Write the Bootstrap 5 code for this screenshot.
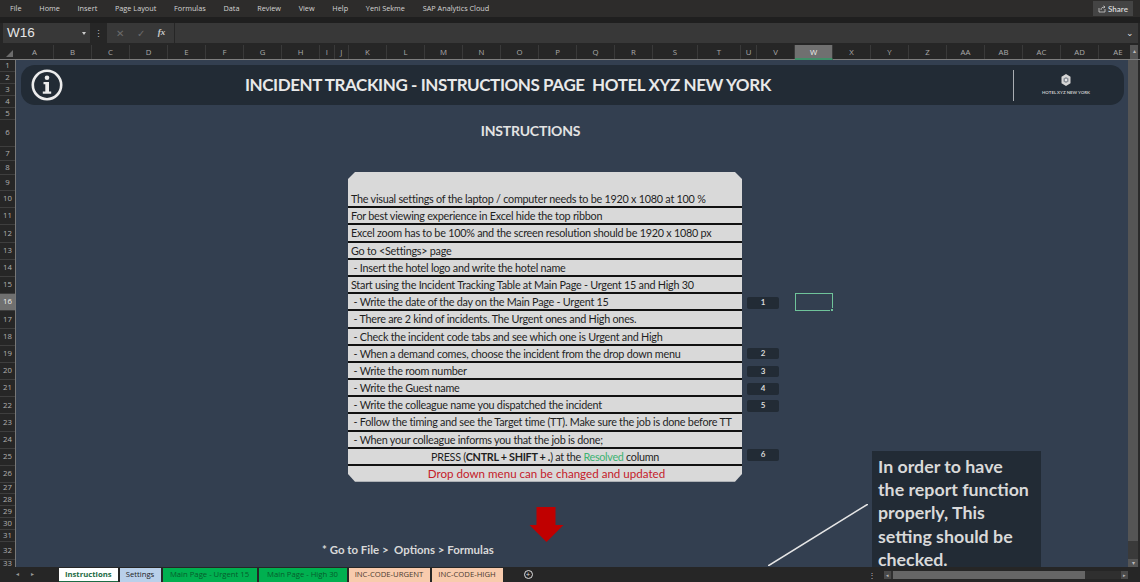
<!DOCTYPE html>
<html lang="en">
<head>
<meta charset="utf-8">
<title>Incident Tracking</title>
<link rel="stylesheet" href="https://cdn.jsdelivr.net/npm/bootstrap@5.3.0/dist/css/bootstrap.min.css">
<style>
html,body{height:582px;overflow:hidden;background:#262626;font-family:"Lato","Liberation Sans",sans-serif}
.xl-app{width:1140px;height:582px;overflow:hidden}
.xl-menu{height:17px;background:#2d2c2b;color:#d4d4d4;font-family:"Open Sans",sans-serif;font-size:7.300px;padding-left:10px;gap:17.700px}
.xl-menu span{white-space:nowrap}
.xl-share{margin-left:auto;margin-right:7px;background:#444;height:15px;width:40px;color:#ddd;font-weight:600;font-size:8px;gap:2px;font-family:"Lato",sans-serif;flex:none}
.xl-strip{height:6px;background:#1f1f1f}
.xl-fbar{height:20px;background:#262626}
.xl-name{width:87px;margin-left:3px;height:20px;background:#383838;color:#e6e6e6;font-family:"Liberation Sans",sans-serif;font-size:13.500px;padding:0 4px;flex:none}
.xl-name i{margin-left:auto;width:0;height:0;border-left:2.500px solid transparent;border-right:2.500px solid transparent;border-top:3px solid #ccc}
.xl-dots{width:17px;color:#bbb;font-size:9px;line-height:1;flex:none}
.xl-fx{width:67px;height:20px;background:#383838;color:#6b6b6b;gap:13px;font-size:10px;flex:none}
.xl-fx b{font-family:"Liberation Serif",serif;font-style:italic;color:#ccc;font-size:9px}
.xl-finput{flex:1;height:20px;margin:0 2px 0 1px;background:#383838;color:#ddd;font-size:9px;padding-right:4px}
.xl-gap{height:2px;background:#262626}
.xl-cols{height:15px;background:#262626;color:#aaa;font-family:"Open Sans",sans-serif;font-size:7.800px;border-bottom:1px solid #7d7d7d}
.xl-corner{width:16px;flex:none;position:relative}
.xl-corner::after{content:"";position:absolute;right:3px;bottom:2px;border-left:7px solid transparent;border-bottom:7px solid #6c6c6c}
.xl-col{flex:none;text-align:center;line-height:14px;border-right:1px solid #3a3a3a;height:14px}
.xl-col-on{background:#707070;color:#eee;border-bottom:2px solid #3f8f68;height:15px}
.xl-col-last{padding-left:7px;border-right:0}
.xl-upbtn{width:8px;height:14px;background:#555;color:#bbb;font-size:6px;line-height:12px;text-align:center;flex:none}
.xl-sb-v{width:12px;flex:none;background:#2a2a2a;padding:0 2px 0 0}
.xl-sb-thumb{height:481px;background:#555}
.xl-sb-track{height:18px;background:#3a3a3a}
.xl-sb-btn{height:8px;background:#555;color:#bbb;font-size:6px;line-height:7px;text-align:center}
.xl-body{height:507px}
.xl-rows{width:16px;flex:none;background:#262626;color:#b0b0b0;font-family:"Open Sans",sans-serif;font-size:7.800px;border-right:1px solid #777;overflow:hidden}
.xl-rows div{border-bottom:1px solid #3e3e3e;display:flex;align-items:center;justify-content:center;overflow:hidden}
.xl-rows .rw-on{background:#707070;color:#eee}
.xl-canvas{flex:1;background:#333f50;position:relative;overflow:hidden;min-width:0}
.xl-banner{height:40px;margin:5px 4.500px 0 4.500px;background:#222b35;border-radius:14px;color:#f0f0f0}
.xl-info{margin-left:10px;flex:none}
.xl-btitle{font-size:17px;font-weight:700;letter-spacing:-.42px;color:#e9e9e9;white-space:pre;margin-left:182.500px}
.xl-bsep{width:1px;height:31px;background:#a9adb2;margin-left:auto;flex:none}
.xl-brand{width:104px;flex:none;margin-right:5.500px;color:#c8c8c8;font-size:4.400px;font-weight:700;gap:4px;text-align:center}
.xl-h2{height:35px;font-size:14px;font-weight:700;letter-spacing:-.2px;color:#e3e3e3;text-align:center;padding-top:19px;line-height:1;width:1029px}
.xl-list{margin-top:32px;margin-left:332px}
.xl-row{height:17.200px}
.xl-cell{width:394px;flex:none;height:100%;background:#d9d9d9;color:#1f1f1f;font-size:10.800px;letter-spacing:-.24px;line-height:15.500px;padding-left:3px;border-bottom:2px solid #111;white-space:nowrap;overflow:hidden}
.xl-top{height:19px;border-bottom:0;clip-path:polygon(7px 0,387px 0,394px 7px,394px 100%,0 100%,0 7px)}
.xl-center{text-align:center;padding-left:0;letter-spacing:-.3px}
.xl-foot{height:15.700px;border-bottom:0;color:#c4202a;font-size:11.600px;letter-spacing:0;text-align:center;clip-path:polygon(0 0,100% 0,100% 8px,387px 100%,7px 100%,0 8px);line-height:15px}
.xl-green{color:#3cb371}
.xl-pill{width:32px;height:11.500px;margin-left:5px;margin-top:3px;background:#222b35;border-radius:2px;color:#d9d9d9;font-size:8px;font-weight:700;line-height:11.500px;text-align:center;flex:none}
.xl-pill-hi{margin-top:2px}
.xl-pill-top{margin-top:.5px}
.xl-pillgap{width:32px;margin-left:5px;flex:none}
.xl-sel{width:38px;height:18px;margin-left:16px;margin-top:-1px;border:1px solid #6fc39a;position:relative;flex:none}
.xl-sel::after{content:"";position:absolute;right:-2px;bottom:-2px;width:4px;height:4px;background:#6fc39a;border:1px solid #333f50}
.xl-note{position:absolute;left:306px;top:481px;color:#d9d9d9;font-size:11.450px;font-weight:700;white-space:pre}
.xl-arrow{position:absolute;left:513px;top:447px}
.xl-line{position:absolute;left:752px;top:444px}
.xl-call{position:absolute;left:856px;top:391px;width:169px;height:140px;background:#222b35;color:#d9d9d9;font-size:17.800px;font-weight:700;line-height:23.400px;padding:3.500px 11px 3.500px 6px}
.xl-tabs{height:15px;background:#262626;font-size:7.700px;font-family:"Open Sans",sans-serif}
.xl-nav{width:59px;flex:none;color:#999;font-size:6px;gap:12px;padding-left:16px}
.xl-tab{height:14px;line-height:13px;text-align:center;margin-right:2px;flex:none;color:#222}
.xl-tab-on{background:#fff;color:#1d6b45;font-weight:700;width:58.500px;border-bottom:1px solid #1d6b45}
.xl-tab-blue{background:#b9d0ea;width:41px}
.xl-tab-green{background:#00b050;width:94px;color:#075c2c}
.xl-tab-green2{width:88px}
.xl-tab-peach{background:#f8cbad;color:#4a3a30;width:81px}
.xl-tab-peach2{width:71px}
.xl-add{width:9px;height:9px;border:1px solid #ddd;border-radius:50%;color:#ddd;margin-left:19px;font-size:8px;line-height:6px;text-align:center;flex:none}
.xl-hdots{margin-left:auto;color:#bbb;font-size:8px;line-height:1;margin-right:8px;flex:none}
.xl-hbar{width:244px;height:8px;margin-right:12px;background:#2f2f2f;flex:none}
.xl-hbtn{width:7px;height:8px;background:#4a4a4a;color:#bbb;font-size:5px;line-height:8px;text-align:center;flex:none}
.xl-hthumb{width:192px;height:8px;background:#666;margin-left:2px;flex:none}
.xl-hbtn-end{margin-left:auto}
</style>
</head>
<body>
<div class="xl-app d-flex flex-column">
  <div class="xl-menu d-flex align-items-center">
    <span>File</span><span>Home</span><span>Insert</span><span>Page Layout</span><span>Formulas</span><span>Data</span><span>Review</span><span>View</span><span>Help</span><span>Yeni Sekme</span><span>SAP Analytics Cloud</span>
    <div class="xl-share d-flex align-items-center justify-content-center">
      <svg width="8" height="8" viewBox="0 0 8 8" fill="none" stroke="#ccc" stroke-width=".8"><path d="M1 3v4h6V4M3 5c0-2 1-3 4-3M5.500 .8 7 2 5.500 3.200"/></svg>Share
    </div>
  </div>
  <div class="xl-strip"></div>
  <div class="xl-fbar d-flex align-items-center">
    <div class="xl-name d-flex align-items-center">W16<i></i></div>
    <div class="xl-dots text-center">⋮</div>
    <div class="xl-fx d-flex align-items-center justify-content-center">
      <span>✕</span><span>✓</span><b>fx</b>
    </div>
    <div class="xl-finput d-flex align-items-center justify-content-end">⌄</div>
  </div>
  <div class="xl-gap"></div>
  <div class="xl-cols d-flex" id="cols"><div class="xl-corner"></div></div>
  <div class="xl-body d-flex">
    <div class="xl-rows" id="rows"></div>
    <div class="xl-canvas">
      <div class="xl-banner d-flex align-items-center">
        <svg class="xl-info" width="32" height="32" viewBox="0 0 32 32" fill="none"><circle cx="16" cy="16" r="14.200" stroke="#ececec" stroke-width="2.600"/><circle cx="16" cy="8.800" r="2.300" fill="#ececec"/><path d="M12.500 13h5.500v9.500h2.200v2.300h-8.400v-2.300h2.500v-7.200h-1.800z" fill="#ececec"/></svg>
        <div class="xl-btitle">INCIDENT TRACKING - INSTRUCTIONS PAGE  HOTEL XYZ NEW YORK</div>
        <div class="xl-bsep"></div>
        <div class="xl-brand d-flex flex-column align-items-center">
          <svg width="10" height="12" viewBox="0 0 10 12"><path d="M5 0 9.500 2.800v6.400L5 12 .5 9.200V2.800z" fill="#d5d5d5"/><path d="M5 3 7.500 4.500v3L5 9 2.500 7.500v-3z" fill="#8b9098"/><circle cx="5" cy="6" r="1.200" fill="#e8e8e8"/></svg>
          <span>HOTEL XYZ NEW YORK</span>
        </div>
      </div>
      <div class="xl-h2">INSTRUCTIONS</div>
      <div class="xl-list" id="list"></div>
      <div class="xl-note">* Go to File &gt;  Options &gt; Formulas</div>
      <svg class="xl-arrow" width="35" height="36" viewBox="0 0 35 36"><path d="M7.500 0h19v18h8L17.500 35 .5 18h7z" fill="#c00000"/></svg>
      <svg class="xl-line" width="100" height="62" viewBox="0 0 100 62"><path d="M0 62 100 0" stroke="#e6e6e6" stroke-width="1.500"/></svg>
      <div class="xl-call">In order to have the report function properly, This setting should be checked.</div>
    </div>
    <div class="xl-sb-v">
      <div class="xl-sb-thumb"></div>
      <div class="xl-sb-track"></div>
      <div class="xl-sb-btn">▾</div>
    </div>
  </div>
  <div class="xl-tabs d-flex align-items-center">
    <div class="xl-nav d-flex align-items-center"><span>◂</span><span>▸</span></div>
    <div class="xl-tab xl-tab-on">Instructions</div>
    <div class="xl-tab xl-tab-blue">Settings</div>
    <div class="xl-tab xl-tab-green">Main Page - Urgent 15</div>
    <div class="xl-tab xl-tab-green xl-tab-green2">Main Page - High 30</div>
    <div class="xl-tab xl-tab-peach">INC-CODE-URGENT</div>
    <div class="xl-tab xl-tab-peach xl-tab-peach2">INC-CODE-HIGH</div>
    <div class="xl-add">+</div>
    <div class="xl-hdots">⋮</div>
    <div class="xl-hbar d-flex align-items-center"><div class="xl-hbtn">◂</div><div class="xl-hthumb"></div><div class="xl-hbtn xl-hbtn-end">▸</div></div>
  </div>
</div>
<script>
const cols=[["A",38],["B",38],["C",38],["D",38],["E",38],["F",38],["G",38],["H",38],["I",14.5],["J",14.5],["K",38],["L",38],["M",38],["N",38],["O",38],["P",38],["Q",38],["R",38],["S",45],["T",43],["U",16],["V",38],["W",38],["X",38],["Y",38],["Z",38],["AA",38],["AB",38],["AC",38],["AD",38],["AE",31]];
const cEl=document.getElementById('cols');
cols.forEach(([n,w])=>{const d=document.createElement('div');d.className='xl-col'+(n==='W'?' xl-col-on':'')+(n==='AE'?' xl-col-last':'');d.style.width=w+'px';d.textContent=n;cEl.appendChild(d);});
const up=document.createElement('div');up.className='xl-upbtn';up.textContent='▴';cEl.appendChild(up);
const rows=[12,12,12,12,12,27,14,14,16,17.2,17.2,17.2,17.2,17.2,17.2,17.2,17.2,17.2,17.2,17.2,17.2,17.2,17.2,17.2,17.2,17.2,11,12,12,12,12,18,8];
const rEl=document.getElementById('rows');
rows.forEach((h,i)=>{const d=document.createElement('div');d.style.height=h+'px';if(i+1===16)d.className='rw-on';d.textContent=i+1;rEl.appendChild(d);});
const items=[
["The visual settings of the laptop / computer needs to be 1920 x 1080 at 100 %"],
["For best viewing experience in Excel hide the top ribbon"],
["Excel zoom has to be 100% and the screen resolution should be 1920 x 1080 px"],
["Go to &lt;Settings&gt; page"],
["&nbsp;- Insert the hotel logo and write the hotel name"],
["Start using the Incident Tracking Table at Main Page - Urgent 15 and High 30"],
["&nbsp;- Write the date of the day on the Main Page - Urgent 15","1",1],
["&nbsp;- There are 2 kind of incidents. The Urgent ones and High ones."],
["&nbsp;- Check the incident code tabs and see which one is Urgent and High"],
["&nbsp;- When a demand comes, choose the incident from the drop down menu","2",0,"","xl-pill-hi"],
["&nbsp;- Write the room number","3"],
["&nbsp;- Write the Guest name","4"],
["&nbsp;- Write the colleague name you dispatched the incident","5"],
["&nbsp;- Follow the timing and see the Target time (TT). Make sure the job is done before TT"],
["&nbsp;- When your colleague informs you that the job is done;"],
['PRESS (<b>CNTRL + SHIFT + .</b>) at the <span class="xl-green">Resolved</span> column',"6",0,"xl-center","xl-pill-top"]];
let h='<div class="d-flex"><div class="xl-cell xl-top"></div></div>';
items.forEach(([t,p,s,c,m])=>{h+=`<div class="xl-row d-flex"><div class="xl-cell ${c||''}">${t}</div>`+(p?`<div class="xl-pill ${m||''}">${p}</div>`:'<div class="xl-pillgap"></div>')+(s?'<div class="xl-sel"></div>':'')+'</div>';});
h+='<div class="d-flex"><div class="xl-cell xl-foot">Drop down menu can be changed and updated</div></div>';
document.getElementById('list').innerHTML=h;
</script>
<script src="https://cdn.jsdelivr.net/npm/bootstrap@5.3.0/dist/js/bootstrap.bundle.min.js"></script>
</body>
</html>
